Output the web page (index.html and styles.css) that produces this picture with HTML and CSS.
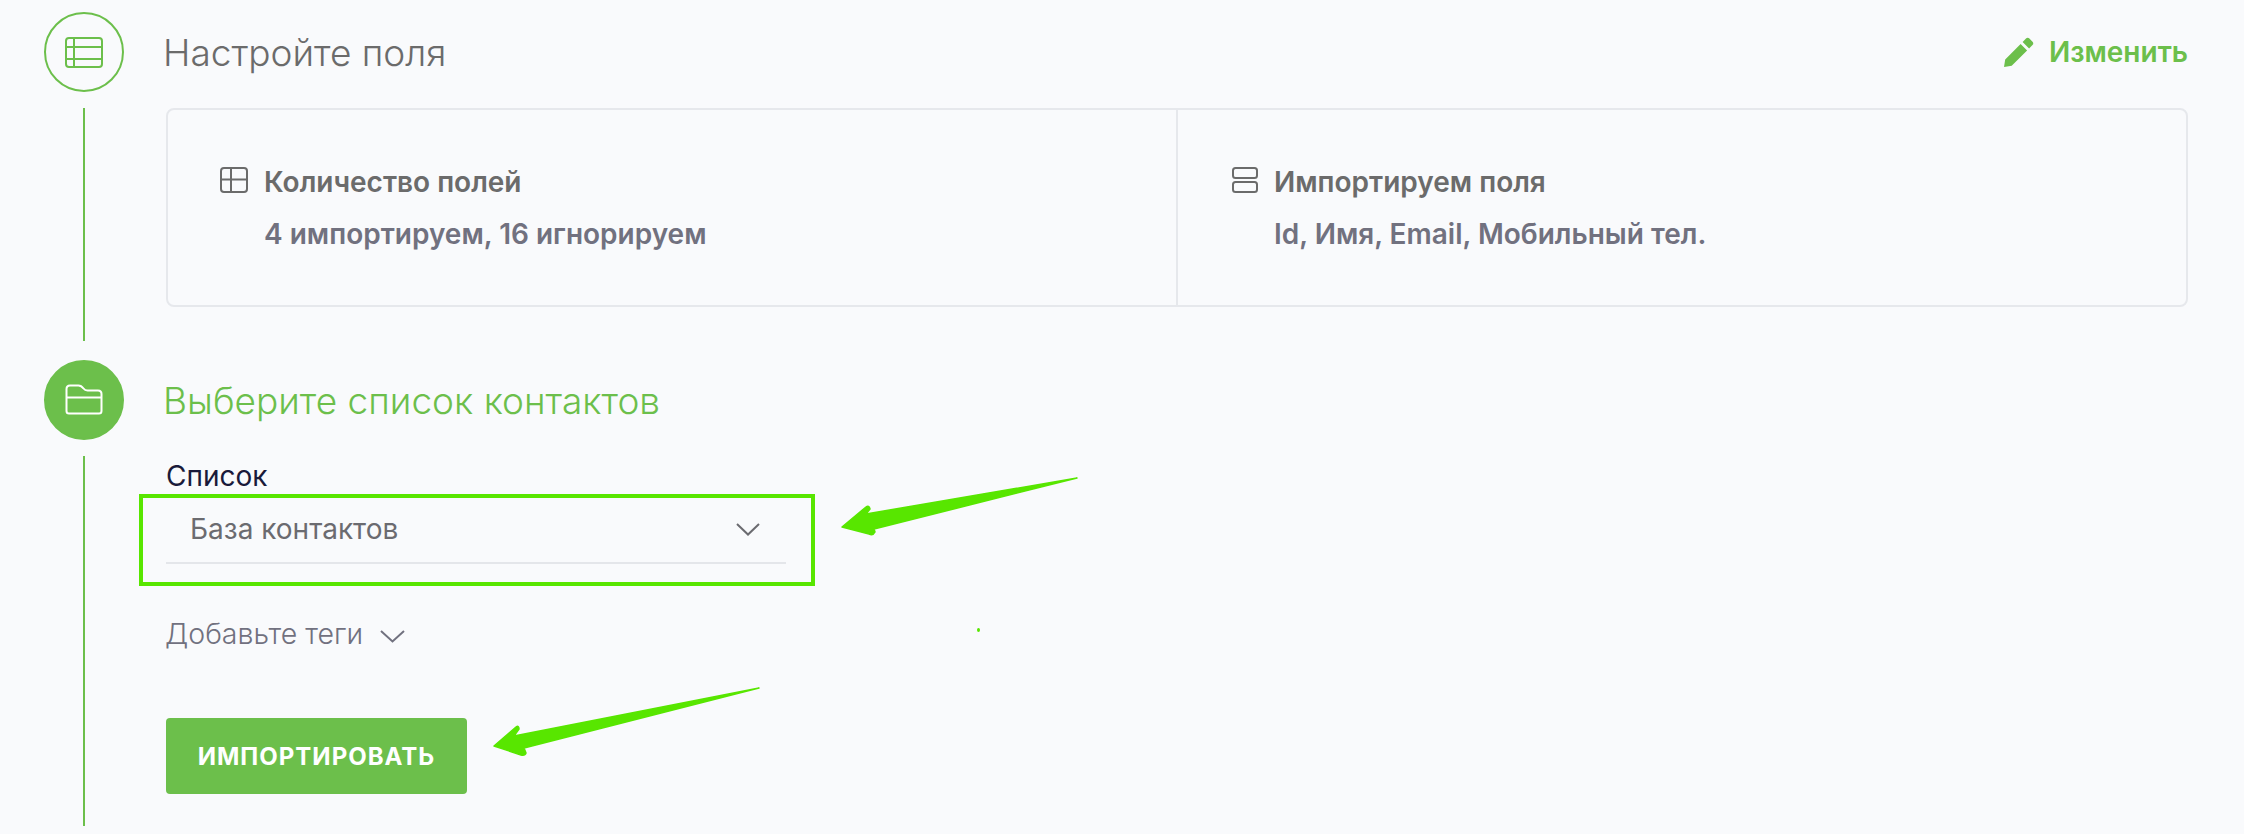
FILE: index.html
```html
<!DOCTYPE html>
<html>
<head>
<title>Импорт контактов</title>
<link rel="stylesheet" href="styles.css">
</head>
<body>
<div id="main">

<div class="step">
<div class="circle">
<svg width="40" height="33" viewBox="0 0 40 33" fill="none" stroke="#6cbf4b" stroke-width="2"><rect x="2" y="2" width="36" height="29" rx="3"/><path d="M10 2v29M2 11h36M2 23h36"/></svg>
</div>
<div class="head">
<span class="title">Настройте поля</span>
<a href="#" class="edit">
<svg width="30" height="30" viewBox="0 0 30 30" fill="#6cbf4b"><path d="M0 30l1.2-7.6L16.6 7l6.5 6.5L7.7 28.8zM18.6 5l3.4-3.4c1-1 2.4-1 3.4 0l3.1 3.1c1 1 1 2.4 0 3.4l-3.4 3.4z"/></svg>
<span>Изменить</span>
</a>
</div>
<div class="rail"></div>
<div class="content first">
<div class="card">
<div class="cell">
<svg class="ico" width="28" height="26" viewBox="0 0 28 26" fill="none" stroke="#6b6b6b" stroke-width="2"><rect x="1" y="1" width="26" height="24" rx="3"/><path d="M1 12.5h26M11 1v24"/></svg>
<div>
<h4>Количество полей</h4>
<p>4 импортируем, 16 игнорируем</p>
</div>
</div>
<div class="cell cell-right">
<svg class="ico" width="26" height="26" viewBox="0 0 26 26" fill="none" stroke="#6b6b6b" stroke-width="2"><rect x="1" y="1" width="24" height="10" rx="2.5"/><rect x="1" y="15" width="24" height="10" rx="2.5"/></svg>
<div>
<h4>Импортируем поля</h4>
<p>Id, Имя, Email, Мобильный тел.</p>
</div>
</div>
</div>
</div>
</div>

<div class="step second">
<div class="circle active">
<svg width="38" height="32" viewBox="0 0 38 32" fill="none" stroke="#fff" stroke-width="2" stroke-linejoin="round"><path d="M1.5 5c0-2 1.5-3.500 3.500-3.500h8.500c2.500 0 3.500 1 5 3 1 1.300 2 2 4 2H33c2 0 3.500 1.500 3.500 3.500v17c0 1.500-1 2.500-2.500 2.500H4c-1.500 0-2.500-1-2.500-2.500z"/><path d="M1.5 13.5h35"/></svg>
</div>
<div class="head">
<span class="title green">Выберите список контактов</span>
</div>
<div class="rail"></div>
<div class="content last">
<label class="label">Список</label>
<div class="select">
<span>База контактов</span>
<svg width="24" height="13" viewBox="0 0 24 13" fill="none" stroke="#6b6b70" stroke-width="2"><path d="M1 1l11 10.500L23 1"/></svg>
</div>
<a href="#" class="tags">
<span>Добавьте теги</span>
<svg width="25" height="13" viewBox="0 0 25 13" fill="none" stroke="#71717f" stroke-width="2"><path d="M1 1l11.500 10.500L24 1"/></svg>
</a>
<button class="import">ИМПОРТИРОВАТЬ</button>
</div>
</div>

</div>

<div class="mark"></div>
<div class="dot"></div>
<svg class="arrows" width="2244" height="834" viewBox="0 0 2244 834" fill="#58e600" stroke="#58e600" stroke-linejoin="round">
<path stroke-width="1.5" d="M842 527L866 507Q869 505 870 509L866 514L1077 478L874 529L875 532Q873 536 869 534z"/>
<path stroke-width="1.5" d="M494 746L516 727Q519 725 519 729L514 736L759 688L524 748L526 753Q525 756 521 755z"/>
</svg>
</body>
</html>
```

FILE: styles.css
```css
*{
margin: 0;
padding: 0;
box-sizing: border-box;
}
html,body{
height: 100%;
}
body{
background: #f9fafc;
font-family: Inter, "Noto Sans", sans-serif;
overflow: hidden;
}
#main{
padding: 12px 56px 0 44px;
}
.step{
display: grid;
grid-template-columns: 80px 1fr;
column-gap: 42px;
row-gap: 16px;
}
.second{
margin-top: 19px;
}
.circle{
width: 80px;
height: 80px;
border-radius: 50%;
border: 2px solid #6cbf4b;
display: flex;
align-items: center;
justify-content: center;
}
.active{
background: #6cbf4b;
}
.head{
display: flex;
align-items: center;
justify-content: space-between;
}
.title{
margin-left: -3px;
font-size: 37px;
font-weight: 300;
color: #6b6b6b;
}
.green{
color: #6cbf4b;
}
.edit{
display: flex;
align-items: center;
gap: 15px;
color: #6cbf4b;
font-size: 28px;
font-weight: 600;
text-decoration: none;
}
.rail{
width: 2px;
justify-self: center;
background: #6cbf4b;
}
.first{
height: 233px;
}
.last{
height: 370px;
padding-top: 3px;
}
.card{
display: grid;
grid-template-columns: 1008px 1fr;
height: 199px;
border: 2px solid #e6e8ec;
border-radius: 8px;
}
.cell{
display: flex;
gap: 16px;
padding: 55px 0 0 52px;
}
.cell-right{
border-left: 2px solid #e6e8ec;
padding-left: 54px;
}
.ico{
flex-shrink: 0;
margin-top: 2px;
}
h4{
font-size: 28px;
font-weight: 600;
line-height: 34px;
color: #6b6b6b;
}
.cell p{
margin-top: 18px;
font-size: 28px;
font-weight: 600;
line-height: 34px;
color: #71717f;
}
.label{
display: block;
font-size: 28px;
line-height: 34px;
color: #1a1a3a;
}
.select{
display: flex;
align-items: center;
justify-content: space-between;
width: 620px;
height: 68px;
padding: 0 26px 0 24px;
margin-top: 3px;
border-bottom: 2px solid #e4e6ea;
font-size: 28px;
line-height: 34px;
color: #6b6b70;
}
.tags{
display: flex;
align-items: center;
gap: 17px;
margin-top: 53px;
margin-left: -1px;
font-size: 28.5px;
line-height: 34px;
font-weight: 300;
color: #71717f;
text-decoration: none;
}
.tags svg{
margin-top: 5px;
}
.import{
display: block;
width: 301px;
height: 76px;
margin-top: 67px;
border: 0;
border-radius: 4px;
background: #6cbf4b;
color: #fff;
font-family: Inter, "Noto Sans", sans-serif;
font-size: 24px;
font-weight: 700;
letter-spacing: 1px;
cursor: pointer;
}
.mark{
position: absolute;
left: 139px;
top: 494px;
width: 676px;
height: 92px;
border: 4px solid #58e600;
}
.dot{
position: absolute;
left: 977px;
top: 628px;
width: 3px;
height: 4px;
border-radius: 50%;
background: #58e600;
}
.arrows{
position: absolute;
left: 0;
top: 0;
}
```
